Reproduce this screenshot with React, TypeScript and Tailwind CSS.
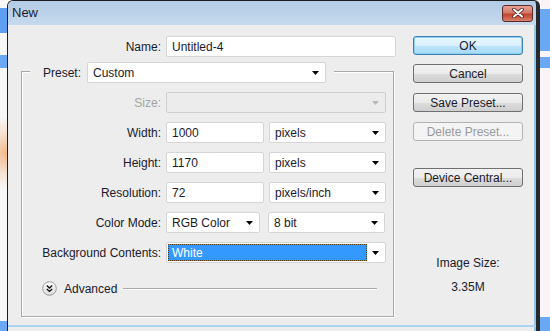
import React from 'react'

const Arrow = ({ disabled }: { disabled?: boolean }) => (
  <svg width="7" height="4" viewBox="0 0 7 4" className="shrink-0">
    <path d="M0 0h7L3.5 4z" fill={disabled ? '#b8b8b8' : '#000'} />
  </svg>
)

const Field = ({ value, width }: { value: string; width: string }) => (
  <div className={`${width} flex h-[21px] items-center rounded-[2px] border border-[#d5d5d5] bg-white pl-[5px] text-[#1a1a2a]`}>
    {value}
  </div>
)

const Select = ({ value, width, disabled }: { value: string; width: string; disabled?: boolean }) => (
  <div
    className={`${width} flex h-[21px] items-center justify-between rounded-[2px] border pl-[5px] pr-[6px] ${
      disabled ? 'border-[#cfcfcf] bg-[#ececec]' : 'border-[#d5d5d5] bg-white'
    } text-[#1a1a2a]`}
  >
    <span>{value}</span>
    <Arrow disabled={disabled} />
  </div>
)

const Row = ({ label, children, disabled }: { label: string; children: React.ReactNode; disabled?: boolean }) => (
  <div className="flex h-[21px] items-center">
    <span className={`w-[139px] text-right ${disabled ? 'text-[#a3a3a3]' : 'text-[#1a1a2a]'}`}>{label}</span>
    <div className="ml-[5px] flex gap-[5px]">{children}</div>
  </div>
)

const Button = ({ label, primary, disabled, className = '' }: { label: string; primary?: boolean; disabled?: boolean; className?: string }) => (
  <div
    className={`${className} flex h-[19px] w-[110px] items-center justify-center rounded-[3px] border ${
      primary
        ? 'border-[#3c7fb1] bg-[linear-gradient(#eaf6fd_0%,#d9f0fc_50%,#bee6fd_51%,#a7d9f5_100%)] shadow-[inset_0_0_0_1px_#8fd0f0]'
        : disabled
          ? 'border-[#adb2b5] bg-[#f4f4f4] text-[#9a9a9a]'
          : 'border-[#707070] bg-[linear-gradient(#f2f2f2_0%,#ebebeb_50%,#dddddd_51%,#cfcfcf_100%)]'
    } ${disabled ? '' : 'text-[#1a1a2a]'}`}
  >
    {label}
  </div>
)

export default function App() {
  return (
    <div className="flex h-[331px] w-[550px] overflow-hidden bg-white font-['Liberation_Sans',Arial,sans-serif] text-[12px] leading-[14px]">
      {/* desktop behind, left */}
      <div className="flex w-[7px] flex-col bg-[#f7f7f7]">
        <div className="mt-[8px] h-[25px] bg-[#5e9ff2]" />
        <div className="mt-[22px] h-[13px] bg-[#6aa8f4]" />
        <div className="mt-[40px] h-[90px] bg-[radial-gradient(circle_at_100%_50%,#f1b88a_0%,#f7e2d2_45%,#f7f7f7_80%)]" />
        <div className="flex-1" />
        <div className="h-[10px] bg-[#6aa8f4]" />
      </div>

      {/* dialog */}
      <div className="flex w-[533px] flex-col rounded-tl-[6px] rounded-tr-[6px] border-t border-l border-r-[4px] border-[#1d1d1d] border-r-[#262a2e] bg-[#ededed] shadow-[inset_-2px_0_0_#8fc6e6]">
        <div className="flex h-[24px] items-center justify-between rounded-tl-[5px] rounded-tr-[5px] bg-[linear-gradient(#b3cbe6,#c6d9ee)] pl-[4px] pr-[3px]">
          <span className="text-[13px] text-[#1b1b30]">New</span>
          <div className="flex h-[17px] w-[31px] items-center justify-center rounded-[3px] border border-[#5b2b2b] bg-[linear-gradient(#e6a395_0%,#d27866_45%,#c0432c_55%,#d8826b_100%)]">
            <svg width="12" height="10" viewBox="0 0 12 10">
              <path d="M2 1.5l8 7M10 1.5l-8 7" stroke="#4a1f1f" strokeWidth="3.6" strokeLinecap="round" />
              <path d="M2 1.5l8 7M10 1.5l-8 7" stroke="#fff" strokeWidth="2" strokeLinecap="round" />
            </svg>
          </div>
        </div>

        <div className="flex flex-1">
          {/* left pane */}
          <div className="flex w-[405px] flex-col pt-[11px]">
            <div className="flex h-[21px] items-center">
              <span className="w-[153px] text-right text-[#1a1a2a]">Name:</span>
              <div className="ml-[5px]">
                <Field value="Untitled-4" width="w-[230px]" />
              </div>
            </div>

            <div className="ml-[13px] mt-[14px] flex h-[246px] w-[373px] flex-col border border-[#a9a9a9] shadow-[inset_1px_1px_0_#fff,1px_1px_0_#fff]">
              <div className="-mt-[10px] ml-[8px] flex h-[21px] w-[304px] items-center bg-[#ededed] pl-[13px]">
                <span className="text-[#1a1a2a]">Preset:</span>
                <div className="ml-[6px]">
                  <Select value="Custom" width="w-[239px]" />
                </div>
              </div>

              <div className="mt-[9px] flex flex-col gap-[9px]">
                <Row label="Size:" disabled>
                  <Select value="" width="w-[220px]" disabled />
                </Row>
                <Row label="Width:">
                  <Field value="1000" width="w-[98px]" />
                  <Select value="pixels" width="w-[117px]" />
                </Row>
                <Row label="Height:">
                  <Field value="1170" width="w-[98px]" />
                  <Select value="pixels" width="w-[117px]" />
                </Row>
                <Row label="Resolution:">
                  <Field value="72" width="w-[98px]" />
                  <Select value="pixels/inch" width="w-[117px]" />
                </Row>
                <Row label="Color Mode:">
                  <Select value="RGB Color" width="w-[94px]" />
                  <div className="ml-[3px]">
                    <Select value="8 bit" width="w-[117px]" />
                  </div>
                </Row>
                <Row label="Background Contents:">
                  <div className="flex h-[21px] w-[220px] items-center rounded-[2px] border border-[#d5d5d5] bg-white p-[1px] pr-[6px]">
                    <div className="flex h-full flex-1 items-center border border-dotted border-[#5a3a10] bg-[#3399ff] pl-[3px] text-white">
                      White
                    </div>
                    <div className="ml-[5px]">
                      <Arrow />
                    </div>
                  </div>
                </Row>
              </div>

              <div className="mt-[18px] flex h-[15px] items-center pl-[20px] pr-[16px]">
                <svg width="15" height="15" viewBox="0 0 15 15" className="shrink-0">
                  <defs>
                    <linearGradient id="adv" x1="0" y1="0" x2="0" y2="1">
                      <stop offset="0" stopColor="#ffffff" />
                      <stop offset="1" stopColor="#dcdcdc" />
                    </linearGradient>
                  </defs>
                  <circle cx="7.5" cy="7.5" r="6.8" fill="url(#adv)" stroke="#9a9a9a" />
                  <path d="M4.8 4.6l2.7 2.4 2.7-2.4M4.8 8l2.7 2.4 2.7-2.4" stroke="#111" strokeWidth="1.4" fill="none" />
                </svg>
                <span className="ml-[7px] text-[#1a1a2a]">Advanced</span>
                <div className="ml-[6px] h-[1px] flex-1 bg-[#a9a9a9] shadow-[0_1px_0_#fff]" />
              </div>
            </div>
          </div>

          {/* right pane */}
          <div className="flex w-[110px] flex-col pt-[11px]">
            <Button label="OK" primary />
            <Button label="Cancel" className="mt-[9px]" />
            <Button label="Save Preset..." className="mt-[10px]" />
            <Button label="Delete Preset..." disabled className="mt-[10px]" />
            <Button label="Device Central..." className="mt-[27px]" />
            <div className="mt-[69px] text-center text-[#1a1a2a]">Image Size:</div>
            <div className="mt-[10px] text-center text-[#1a1a2a]">3.35M</div>
          </div>
        </div>
        <div className="mb-[4px] h-[2px] bg-[#a9d3ee]" />
      </div>

      {/* desktop behind, right */}
      <div className="flex flex-1 flex-col bg-[#fbf4f6]">
        <div className="mt-[9px] h-[42px] bg-[#6aa8f4]" />
        <div className="mt-[6px] h-[11px] bg-[#6aa8f4]" />
        <div className="flex-1" />
        <div className="h-[14px] bg-[#6aa8f4]" />
      </div>
    </div>
  )
}
